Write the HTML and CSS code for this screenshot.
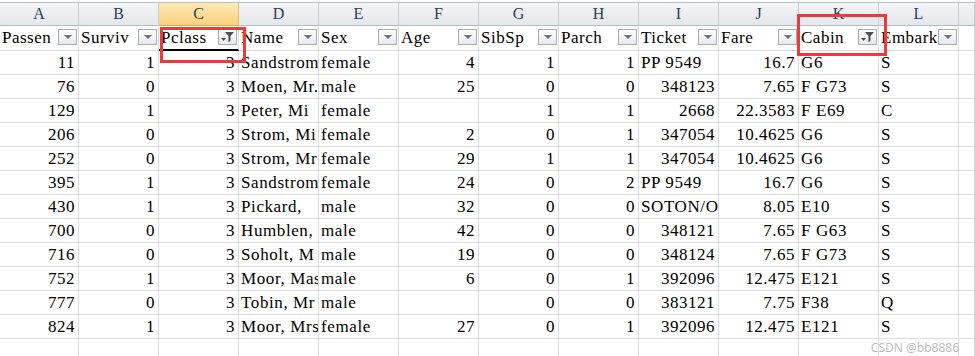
FILE: index.html
```html
<!DOCTYPE html>
<html>

<head>
	<meta charset="utf-8">
	<title>train.csv - filtered</title>
	<link rel="stylesheet" href="styles.css">
</head>

<body>
	<div class="sheet">
		<!-- column letters -->
		<div class="row colhead">
			<div class="ch">A</div>
			<div class="ch">B</div>
			<div class="ch sel">C</div>
			<div class="ch">D</div>
			<div class="ch">E</div>
			<div class="ch">F</div>
			<div class="ch">G</div>
			<div class="ch">H</div>
			<div class="ch">I</div>
			<div class="ch">J</div>
			<div class="ch">K</div>
			<div class="ch">L</div>
			<div class="ch"></div>
		</div>

		<!-- autofilter header row -->
		<div class="row filters">
			<div class="c f"><span class="lbl">Passen</span><span class="fbtn"><i class="tri"></i></span></div>
			<div class="c f"><span class="lbl">Surviv</span><span class="fbtn"><i class="tri"></i></span></div>
			<div class="c f active"><span class="lbl">Pclass</span><span class="fbtn on">
				<svg width="17" height="14" viewBox="0 0 17 14"><path d="M6 2h9l-3.5 4v5l-2 1.3V6z" fill="#4b5058"/><path d="M2 8h5l-2.5 3z" fill="#4b5058"/></svg>
			</span></div>
			<div class="c f"><span class="lbl">Name</span><span class="fbtn"><i class="tri"></i></span></div>
			<div class="c f"><span class="lbl">Sex</span><span class="fbtn"><i class="tri"></i></span></div>
			<div class="c f"><span class="lbl">Age</span><span class="fbtn"><i class="tri"></i></span></div>
			<div class="c f"><span class="lbl">SibSp</span><span class="fbtn"><i class="tri"></i></span></div>
			<div class="c f"><span class="lbl">Parch</span><span class="fbtn"><i class="tri"></i></span></div>
			<div class="c f"><span class="lbl">Ticket</span><span class="fbtn"><i class="tri"></i></span></div>
			<div class="c f"><span class="lbl">Fare</span><span class="fbtn"><i class="tri"></i></span></div>
			<div class="c f"><span class="lbl">Cabin</span><span class="fbtn on">
				<svg width="17" height="14" viewBox="0 0 17 14"><path d="M6 2h9l-3.5 4v5l-2 1.3V6z" fill="#4b5058"/><path d="M2 8h5l-2.5 3z" fill="#4b5058"/></svg>
			</span></div>
			<div class="c f"><span class="lbl">Embark</span><span class="fbtn"><i class="tri"></i></span></div>
			<div class="c"></div>
		</div>

		<div class="row">
			<div class="c n">11</div><div class="c n">1</div><div class="c n">3</div><div class="c">Sandstrom</div>
			<div class="c">female</div><div class="c n">4</div><div class="c n">1</div><div class="c n">1</div>
			<div class="c">PP 9549</div><div class="c n">16.7</div><div class="c">G6</div><div class="c">S</div><div class="c"></div>
		</div>
		<div class="row">
			<div class="c n">76</div><div class="c n">0</div><div class="c n">3</div><div class="c">Moen, Mr.</div>
			<div class="c">male</div><div class="c n">25</div><div class="c n">0</div><div class="c n">0</div>
			<div class="c n">348123</div><div class="c n">7.65</div><div class="c">F G73</div><div class="c">S</div><div class="c"></div>
		</div>
		<div class="row">
			<div class="c n">129</div><div class="c n">1</div><div class="c n">3</div><div class="c">Peter, Mi</div>
			<div class="c">female</div><div class="c n"></div><div class="c n">1</div><div class="c n">1</div>
			<div class="c n">2668</div><div class="c n">22.3583</div><div class="c">F E69</div><div class="c">C</div><div class="c"></div>
		</div>
		<div class="row">
			<div class="c n">206</div><div class="c n">0</div><div class="c n">3</div><div class="c">Strom, Mi</div>
			<div class="c">female</div><div class="c n">2</div><div class="c n">0</div><div class="c n">1</div>
			<div class="c n">347054</div><div class="c n">10.4625</div><div class="c">G6</div><div class="c">S</div><div class="c"></div>
		</div>
		<div class="row">
			<div class="c n">252</div><div class="c n">0</div><div class="c n">3</div><div class="c">Strom, Mr</div>
			<div class="c">female</div><div class="c n">29</div><div class="c n">1</div><div class="c n">1</div>
			<div class="c n">347054</div><div class="c n">10.4625</div><div class="c">G6</div><div class="c">S</div><div class="c"></div>
		</div>
		<div class="row">
			<div class="c n">395</div><div class="c n">1</div><div class="c n">3</div><div class="c">Sandstrom</div>
			<div class="c">female</div><div class="c n">24</div><div class="c n">0</div><div class="c n">2</div>
			<div class="c">PP 9549</div><div class="c n">16.7</div><div class="c">G6</div><div class="c">S</div><div class="c"></div>
		</div>
		<div class="row">
			<div class="c n">430</div><div class="c n">1</div><div class="c n">3</div><div class="c">Pickard,</div>
			<div class="c">male</div><div class="c n">32</div><div class="c n">0</div><div class="c n">0</div>
			<div class="c">SOTON/O.</div><div class="c n">8.05</div><div class="c">E10</div><div class="c">S</div><div class="c"></div>
		</div>
		<div class="row">
			<div class="c n">700</div><div class="c n">0</div><div class="c n">3</div><div class="c">Humblen,</div>
			<div class="c">male</div><div class="c n">42</div><div class="c n">0</div><div class="c n">0</div>
			<div class="c n">348121</div><div class="c n">7.65</div><div class="c">F G63</div><div class="c">S</div><div class="c"></div>
		</div>
		<div class="row">
			<div class="c n">716</div><div class="c n">0</div><div class="c n">3</div><div class="c">Soholt, M</div>
			<div class="c">male</div><div class="c n">19</div><div class="c n">0</div><div class="c n">0</div>
			<div class="c n">348124</div><div class="c n">7.65</div><div class="c">F G73</div><div class="c">S</div><div class="c"></div>
		</div>
		<div class="row">
			<div class="c n">752</div><div class="c n">1</div><div class="c n">3</div><div class="c">Moor, Mas</div>
			<div class="c">male</div><div class="c n">6</div><div class="c n">0</div><div class="c n">1</div>
			<div class="c n">392096</div><div class="c n">12.475</div><div class="c">E121</div><div class="c">S</div><div class="c"></div>
		</div>
		<div class="row">
			<div class="c n">777</div><div class="c n">0</div><div class="c n">3</div><div class="c">Tobin, Mr</div>
			<div class="c">male</div><div class="c n"></div><div class="c n">0</div><div class="c n">0</div>
			<div class="c n">383121</div><div class="c n">7.75</div><div class="c">F38</div><div class="c">Q</div><div class="c"></div>
		</div>
		<div class="row">
			<div class="c n">824</div><div class="c n">1</div><div class="c n">3</div><div class="c">Moor, Mrs</div>
			<div class="c">female</div><div class="c n">27</div><div class="c n">0</div><div class="c n">1</div>
			<div class="c n">392096</div><div class="c n">12.475</div><div class="c">E121</div><div class="c">S</div><div class="c"></div>
		</div>
		<div class="row">
			<div class="c"></div><div class="c"></div><div class="c"></div><div class="c"></div><div class="c"></div>
			<div class="c"></div><div class="c"></div><div class="c"></div><div class="c"></div><div class="c"></div>
			<div class="c"></div><div class="c"></div><div class="c"></div>
		</div>

		<!-- annotation boxes drawn over the sheet -->
		<div class="mark mark-pclass"></div>
		<div class="mark mark-cabin"></div>
		<div class="watermark">CSDN @bb8886</div>
	</div>
</body>

</html>
```

FILE: styles.css
```css
body {
	margin: 0;
	background: #fff;
	overflow: hidden;
}

.sheet {
	position: relative;
	padding-top: 2px;
	font-family: "Liberation Serif", serif;
	font-size: 17px;
	letter-spacing: 0.6px;
	color: #000;
}

.row {
	display: grid;
	grid-template-columns: 79px repeat(11, 80px) 1fr;
	height: 24px;
}

.c {
	border-right: 1px solid #dadcdd;
	border-bottom: 1px solid #dadcdd;
	padding: 0 2px;
	line-height: 24px;
	white-space: nowrap;
	overflow: hidden;
}

.c.n {
	text-align: right;
	padding-right: 3px;
	letter-spacing: 0.5px;
}

/* column letters */
.colhead {
	height: 23px;
	border-top: 1px solid #b9bec6;
}

.ch {
	background: linear-gradient(#f3f4f6, #e4e7eb);
	border-right: 1px solid #c9ced5;
	border-bottom: 1px solid #b7bdc5;
	text-align: center;
	line-height: 22px;
	color: #2c3e55;
	font-size: 16px;
	letter-spacing: 0;
}

.ch.sel {
	background: linear-gradient(#fde9b4, #f8d27e);
	border-right-color: #e9bb6a;
	border-bottom-color: #e3a84a;
}

/* autofilter row */
.filters {
	height: 25px;
}

.c.f {
	display: flex;
	align-items: center;
	padding-right: 1px;
}

.c.active {
	border-bottom: 2px solid #000;
}

.lbl {
	flex: 1;
	overflow: hidden;
	letter-spacing: 0.5px;
}

.fbtn {
	flex: none;
	display: flex;
	align-items: center;
	justify-content: center;
	width: 19px;
	height: 16px;
	margin-top: -2px;
	box-sizing: border-box;
	border: 1px solid #a7aeb7;
	background: linear-gradient(#fdfdfd, #e6e9ee);
}

.tri {
	width: 0;
	height: 0;
	border-left: 4px solid transparent;
	border-right: 4px solid transparent;
	border-top: 4px solid #6a6f77;
}

/* red annotation boxes */
.mark {
	position: absolute;
	border: 3px solid #ec3b3b;
}

.mark-pclass {
	left: 160px;
	top: 27px;
	width: 80px;
	height: 30px;
}

.mark-cabin {
	left: 797px;
	top: 14px;
	width: 84px;
	height: 36px;
}

.watermark {
	position: absolute;
	right: 16px;
	bottom: 7px;
	font-family: "Noto Sans", sans-serif;
	font-size: 12px;
	letter-spacing: 0;
	color: rgba(120, 120, 120, 0.5);
}
```
